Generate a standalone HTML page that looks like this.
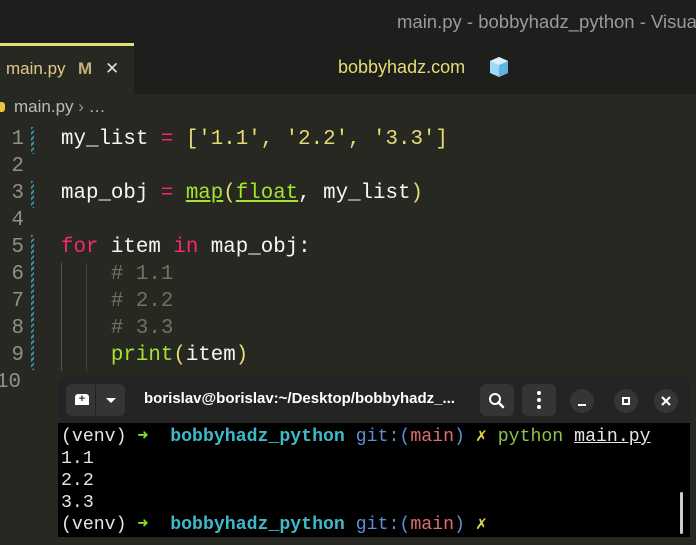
<!DOCTYPE html>
<html><head><meta charset="utf-8"><style>
*{margin:0;padding:0;box-sizing:border-box}
body{width:696px;height:545px;overflow:hidden;background:#272822;font-family:"Liberation Sans",sans-serif;position:relative}
.title{position:absolute;left:0;top:0;width:696px;height:43px;background:#1e1e1e;color:#9a9a9a;font-size:18.5px;line-height:43px;padding-left:397px;white-space:nowrap;overflow:hidden}
.tabs{position:absolute;left:0;top:43px;width:696px;height:51px;background:#1e1f1c}
.tab{position:absolute;left:0;top:0;width:134px;height:51px;background:#272822;border-top:3px solid #e6db74}
.tab span{position:absolute;top:13px;font-size:17px}
.crumb{position:absolute;left:0;top:97px;font-size:17px;color:#bbb}
.code{position:absolute;font-family:"Liberation Mono",monospace;font-size:20.8px;white-space:pre;line-height:27px}
.ln{position:absolute;left:0;width:24px;text-align:right;color:#8f908a}
.w{color:#f8f8f2}.p{color:#f92672}.y{color:#e6db74}.g{color:#a6e22e}.c{color:#75715e}
.mark{position:absolute;left:31px;width:3px;background:repeating-linear-gradient(135deg,#3a8fb0 0 2px,#272822 2px 4px)}
.term{position:absolute;left:58px;top:377px;width:632px;height:160px;background:#000;border-radius:10px 10px 0 0;overflow:hidden}
.th{height:46px;background:#242424;position:relative}
.btn{position:absolute;top:7px;height:32px;background:#353535;border-radius:6px}
.circ{position:absolute;top:12px;width:24px;height:24px;border-radius:50%;background:#353535}
.tt{position:absolute;font-family:"Liberation Mono",monospace;font-size:18.2px;line-height:22px;white-space:pre;color:#e5e5e5;left:3px;top:49px}
.tc{color:#3fb8c8;font-weight:bold}.tg{color:#8ae234;font-weight:bold}.tb{color:#5a8fd8}.tr{color:#e06c6c}.ty{color:#e6d94a}.tl{color:#8ac34a}
</style></head><body>
<div class="title">main.py - bobbyhadz_python - Visual Studio Code</div>
<div class="tabs">
<div class="tab"><span style="left:6px;color:#e0c98a">main.py</span><span style="left:78px;color:#c9b07a;font-weight:bold">M</span><span style="left:105px;color:#ddd">✕</span></div>
<div style="position:absolute;left:338px;top:14px;font-size:18px;color:#e6db74">bobbyhadz.com</div>
<svg style="position:absolute;left:488px;top:12px" width="22" height="24" viewBox="0 0 22 24"><path d="M11 2 L20 6 L20 18 L11 22 L2 18 L2 6 Z" fill="#9fd8f5"/><path d="M11 10 L20 6 L20 18 L11 22 Z" fill="#5fb4e0"/><path d="M2 6 L11 2 L20 6 L11 10 Z" fill="#d8f0fc"/></svg>
</div>
<div style="position:absolute;left:0;top:102px;width:5px;height:10px;background:#e8c440;border-radius:0 3px 3px 0"></div>
<div class="crumb" style="left:14px">main.py <span style="color:#999">›</span> …</div>
<div class="mark" style="top:127px;height:27px"></div>
<div class="mark" style="top:181px;height:27px"></div>
<div class="mark" style="top:235px;height:135px"></div>
<div style="position:absolute;left:61px;top:263px;width:1px;height:108px;background:#555"></div>
<div style="position:absolute;left:86px;top:263px;width:1px;height:108px;background:#444"></div>
<div class="code" style="left:0;top:126px">
<span class="ln" style="top:0">1</span><span class="ln" style="top:27px">2</span><span class="ln" style="top:54px">3</span><span class="ln" style="top:81px">4</span><span class="ln" style="top:108px">5</span><span class="ln" style="top:135px">6</span><span class="ln" style="top:162px">7</span><span class="ln" style="top:189px">8</span><span class="ln" style="top:216px">9</span><span class="ln" style="top:243px;left:-4px">10</span>
</div>
<div class="code" style="left:61px;top:126px"><span class="w">my_list </span><span class="p">=</span> <span class="y">['1.1', '2.2', '3.3']</span>

<span class="w">map_obj </span><span class="p">=</span> <span class="g" style="text-decoration:underline">map</span><span class="y">(</span><span class="g" style="text-decoration:underline">float</span><span class="w">, my_list</span><span class="y">)</span>

<span class="p">for</span><span class="w"> item </span><span class="p">in</span><span class="w"> map_obj:</span>
    <span class="c"># 1.1</span>
    <span class="c"># 2.2</span>
    <span class="c"># 3.3</span>
    <span class="g">print</span><span class="y">(</span><span class="w">item</span><span class="y">)</span></div>
<div class="term">
<div class="th">
<div class="btn" style="left:8px;width:59px"></div>
<div style="position:absolute;left:37px;top:7px;width:1px;height:32px;background:#222"></div>
<div style="position:absolute;left:17px;top:17px;width:14px;height:11px;background:#fff;border-radius:3px 3px 0 0;color:#333;font-size:11px;line-height:11px;text-align:center;font-weight:bold">+</div>
<div style="position:absolute;left:48px;top:21px;border:5px solid transparent;border-top:5px solid #fff"></div>
<div style="position:absolute;left:86px;top:13px;color:#fff;font-size:15px;font-weight:bold">borislav@borislav:~/Desktop/bobbyhadz_...</div>
<div class="btn" style="left:422px;width:34px"></div>
<svg style="position:absolute;left:430px;top:15px" width="18" height="18" viewBox="0 0 18 18"><circle cx="7" cy="7" r="5" fill="none" stroke="#fff" stroke-width="2"/><path d="M10.5 10.5 L15 15" stroke="#fff" stroke-width="2.5" stroke-linecap="round"/></svg>
<div class="btn" style="left:464px;width:34px"></div>
<div style="position:absolute;left:479px;top:14px;width:4px;height:4px;border-radius:50%;background:#fff;box-shadow:0 7px 0 #fff,0 14px 0 #fff"></div>
<div class="circ" style="left:512px"><div style="position:absolute;left:8px;top:15px;width:8px;height:2px;background:#fff"></div></div>
<div class="circ" style="left:556px"><div style="position:absolute;left:8px;top:8px;width:8px;height:8px;border:2px solid #fff"></div></div>
<div class="circ" style="left:596px"><svg width="24" height="24" viewBox="0 0 24 24"><path d="M8 8 L16 16 M16 8 L8 16" stroke="#fff" stroke-width="2.2"/></svg></div>
</div>
<div class="tt">(venv) <span class="tg">➜</span>  <span class="tc">bobbyhadz_python</span> <span class="tb">git:(</span><span class="tr">main</span><span class="tb">)</span> <span class="ty">✗</span> <span class="tl">python</span> <span style="text-decoration:underline">main.py</span>
1.1
2.2
3.3
(venv) <span class="tg">➜</span>  <span class="tc">bobbyhadz_python</span> <span class="tb">git:(</span><span class="tr">main</span><span class="tb">)</span> <span class="ty">✗</span></div>
<div style="position:absolute;left:622px;top:115px;width:3px;height:42px;background:#ccc;border-radius:2px"></div>
</div>
</body></html>
